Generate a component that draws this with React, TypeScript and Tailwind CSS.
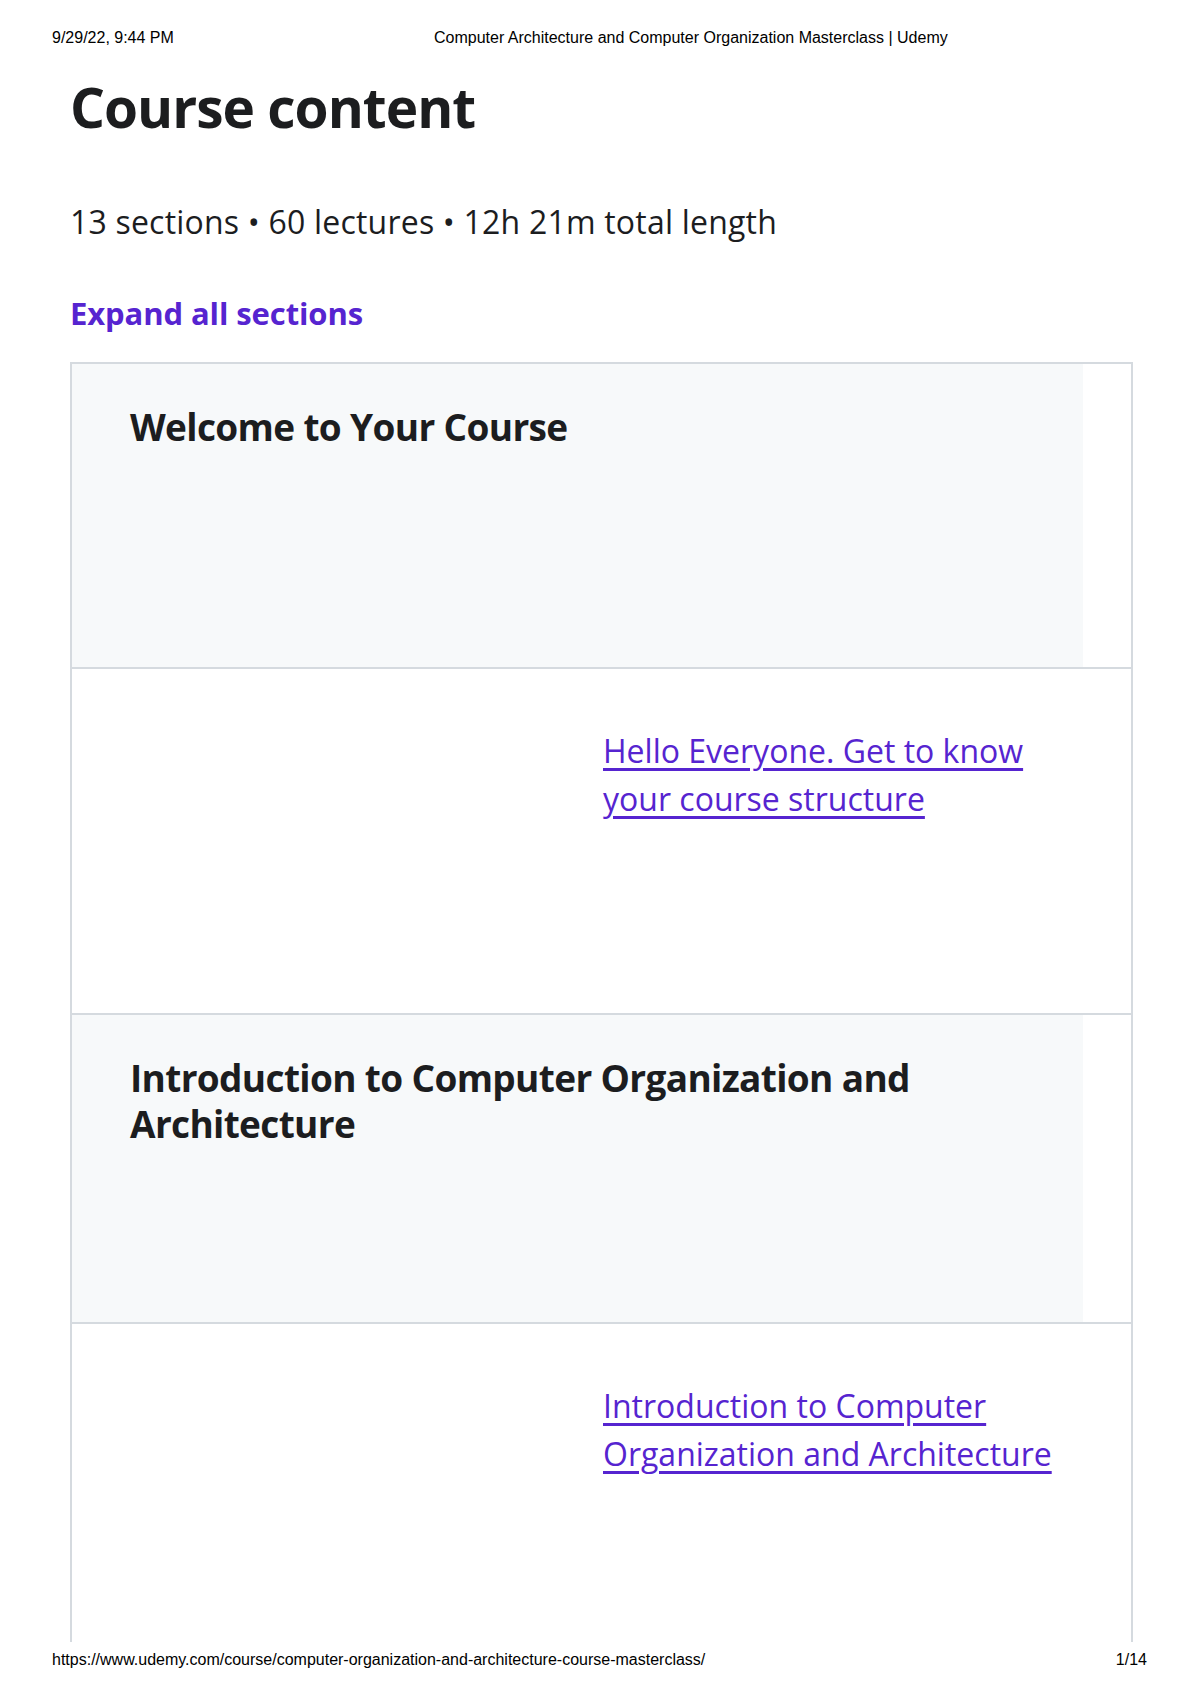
import React from "react";

const sections = [
  {
    title: "Welcome to Your Course",
    lecture: "Hello Everyone. Get to know your course structure",
    headerH: "h-[303px]",
  },
  {
    title: "Introduction to Computer Organization and Architecture",
    lecture: "Introduction to Computer Organization and Architecture",
    headerH: "h-[307px]",
  },
];

export default function App() {
  return (
    <div className="w-[1200px] h-[1698px] bg-white flex flex-col overflow-hidden">
      <div className="h-[1642px] overflow-hidden flex flex-col">
        <div className="flex pt-[29px] px-[52px] text-[16px] leading-[18px] text-black font-['Liberation_Sans',Arial,sans-serif]">
          <span className="w-[382px] shrink-0">9/29/22, 9:44 PM</span>
          <span>Computer Architecture and Computer Organization Masterclass | Udemy</span>
        </div>
        <main className="pl-[70px] font-['Open_Sans','Noto_Sans',sans-serif] text-[#1c1d1f]">
          <h2 className="mt-[26px] text-[55px] leading-[68px] font-bold tracking-[-1px]">Course content</h2>
          <div className="mt-[61px] text-[32px] leading-[40px] tracking-[0.2px]">
            13 sections • 60 lectures • 12h 21m total length
          </div>
          <div className="mt-[51px] text-[31px] leading-[40px] font-bold text-[#5624d0] tracking-[-0.1px]">
            Expand all sections
          </div>
          <div className="mt-[29px] w-[1063px] border-2 border-b-0 border-[#d5dadf]">
            {sections.map((s, i) => (
              <div key={i}>
                <div className="flex border-b-2 border-[#d5dadf]">
                  <div className={`w-[1011px] ${s.headerH} bg-[#f7f9fa] pt-[40px] pl-[58px] pr-[60px]`}>
                    <h3 className="text-[37px] leading-[46px] font-bold tracking-[-0.65px]">{s.title}</h3>
                  </div>
                  <div className="flex-1 bg-white" />
                </div>
                <div className="h-[346px] border-b-2 border-[#d5dadf] pt-[58px] pl-[531px]">
                  <a
                    href="#"
                    className="block w-[475px] text-[32px] leading-[48px] text-[#5624d0] underline decoration-[3px] underline-offset-[5px]"
                  >
                    {s.lecture}
                  </a>
                </div>
              </div>
            ))}
          </div>
        </main>
      </div>
      <div className="flex justify-between pt-[9px] pl-[52px] pr-[53px] text-[16px] leading-[18px] text-black font-['Liberation_Sans',Arial,sans-serif]">
        <span>https://www.udemy.com/course/computer-organization-and-architecture-course-masterclass/</span>
        <span>1/14</span>
      </div>
    </div>
  );
}
